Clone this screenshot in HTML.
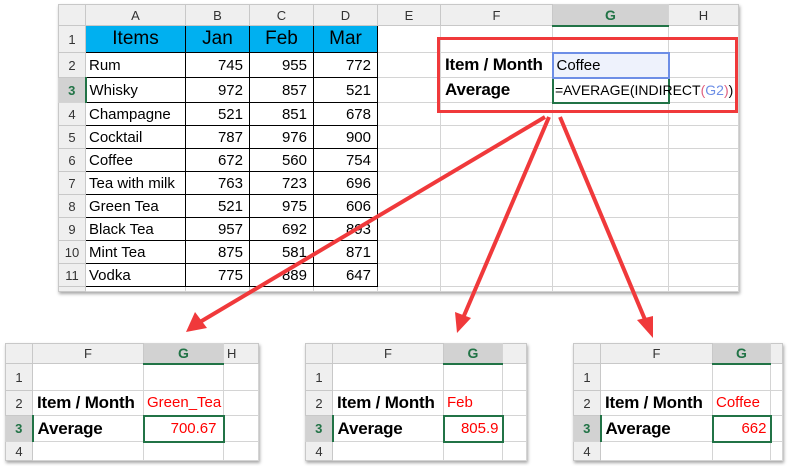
<!DOCTYPE html>
<html><head><meta charset="utf-8"><style>
*{margin:0;padding:0;box-sizing:border-box}
body{width:789px;height:466px;background:#fff;position:relative;overflow:hidden;font-family:"Liberation Sans",Calibri,sans-serif;}
table{border-collapse:collapse;table-layout:fixed;position:absolute;background:#fff}
td{border:1px solid #d4d4d4;font-size:15px;white-space:nowrap;overflow:hidden;padding:0 3px;color:#000}
td.h{background:#efefef;color:#333;text-align:center;font-size:13px;border-color:#c8c8c8}
td.hs{background:#d2d2d2;color:#217346;font-weight:bold;text-align:center;font-size:14px;border-bottom:2px solid #217346}
td.r{background:#efefef;color:#333;text-align:center;font-size:13px;border-color:#c8c8c8}
td.rs{background:#d2d2d2;color:#217346;font-weight:bold;text-align:center;font-size:13px;border-right:2px solid #217346}
.k{border:1px solid #000}
.blue{background:#00b0f0;font-size:19px;text-align:center}
.n{text-align:right;padding-right:6px}
.b{font-weight:bold;padding-left:4px;overflow:visible;font-size:17px;letter-spacing:-0.2px}
.red{color:#f00}
.sel{border:2px solid #217346!important}
.sh{box-shadow:1px 2px 3px rgba(0,0,0,.35)}
</style></head><body>

<table class="sh" style="left:58px;top:4px;width:680px">
<colgroup><col style="width:27px"><col style="width:100px"><col style="width:64px"><col style="width:64px"><col style="width:64px"><col style="width:63px"><col style="width:112px"><col style="width:116px"><col style="width:70px"></colgroup>
<tr style="height:21px"><td class="h"></td><td class="h">A</td><td class="h">B</td><td class="h">C</td><td class="h">D</td><td class="h">E</td><td class="h">F</td><td class="hs">G</td><td class="h">H</td></tr>
<tr style="height:27px"><td class="r">1</td><td class="k blue">Items</td><td class="k blue">Jan</td><td class="k blue">Feb</td><td class="k blue">Mar</td><td></td><td></td><td></td><td></td></tr>
<tr style="height:25px"><td class="r">2</td><td class="k">Rum</td><td class="k n">745</td><td class="k n">955</td><td class="k n">772</td><td></td><td class="b">Item / Month</td><td style="background:#eef2fc;border:2px solid #6d8ee6">Coffee</td><td></td></tr>
<tr style="height:25px"><td class="rs">3</td><td class="k">Whisky</td><td class="k n">972</td><td class="k n">857</td><td class="k n">521</td><td></td><td class="b">Average</td><td class="sel"></td><td></td></tr>
<tr style="height:23px"><td class="r">4</td><td class="k">Champagne</td><td class="k n">521</td><td class="k n">851</td><td class="k n">678</td><td></td><td></td><td></td><td></td></tr>
<tr style="height:23px"><td class="r">5</td><td class="k">Cocktail</td><td class="k n">787</td><td class="k n">976</td><td class="k n">900</td><td></td><td></td><td></td><td></td></tr>
<tr style="height:23px"><td class="r">6</td><td class="k">Coffee</td><td class="k n">672</td><td class="k n">560</td><td class="k n">754</td><td></td><td></td><td></td><td></td></tr>
<tr style="height:23px"><td class="r">7</td><td class="k">Tea with milk</td><td class="k n">763</td><td class="k n">723</td><td class="k n">696</td><td></td><td></td><td></td><td></td></tr>
<tr style="height:23px"><td class="r">8</td><td class="k">Green Tea</td><td class="k n">521</td><td class="k n">975</td><td class="k n">606</td><td></td><td></td><td></td><td></td></tr>
<tr style="height:23px"><td class="r">9</td><td class="k">Black Tea</td><td class="k n">957</td><td class="k n">692</td><td class="k n">893</td><td></td><td></td><td></td><td></td></tr>
<tr style="height:23px"><td class="r">10</td><td class="k">Mint Tea</td><td class="k n">875</td><td class="k n">581</td><td class="k n">871</td><td></td><td></td><td></td><td></td></tr>
<tr style="height:23px"><td class="r">11</td><td class="k">Vodka</td><td class="k n">775</td><td class="k n">889</td><td class="k n">647</td><td></td><td></td><td></td><td></td></tr>
<tr style="height:5px"><td class="r"></td><td></td><td></td><td></td><td></td><td></td><td></td><td></td><td></td></tr>
</table>
<div style="position:absolute;left:555px;top:82px;font-size:14px;z-index:3;white-space:nowrap">=AVERAGE(INDIRECT<span style="color:#e06080">(</span><span style="color:#6d8ee6">G2</span><span style="color:#e06080">)</span>)</div>
<div style="position:absolute;left:437px;top:37px;width:301px;height:76px;border:3px solid #f0393b;z-index:4"></div>

<table class="sh" style="left:5px;top:343px;width:253px">
<colgroup><col style="width:27px"><col style="width:111px"><col style="width:80px"><col style="width:35px"></colgroup>
<tr style="height:20px"><td class="h"></td><td class="h">F</td><td class="hs">G</td><td class="h" style="text-align:left">H</td></tr>
<tr style="height:27px"><td class="r">1</td><td></td><td></td><td></td></tr>
<tr style="height:25px"><td class="r">2</td><td class="b">Item / Month</td><td class="red">Green_Tea</td><td></td></tr>
<tr style="height:26px"><td class="rs">3</td><td class="b">Average</td><td class="sel red n">700.67</td><td></td></tr>
<tr style="height:19px"><td class="r">4</td><td></td><td></td><td></td></tr>
</table>

<table class="sh" style="left:305px;top:343px;width:221px">
<colgroup><col style="width:27px"><col style="width:111px"><col style="width:59px"><col style="width:24px"></colgroup>
<tr style="height:20px"><td class="h"></td><td class="h">F</td><td class="hs">G</td><td class="h"></td></tr>
<tr style="height:27px"><td class="r">1</td><td></td><td></td><td></td></tr>
<tr style="height:25px"><td class="r">2</td><td class="b">Item / Month</td><td class="red">Feb</td><td></td></tr>
<tr style="height:26px"><td class="rs">3</td><td class="b">Average</td><td class="sel red n" style="padding-right:3px">805.9</td><td></td></tr>
<tr style="height:19px"><td class="r">4</td><td></td><td></td><td></td></tr>
</table>

<table class="sh" style="left:573px;top:343px;width:209px">
<colgroup><col style="width:27px"><col style="width:112px"><col style="width:58px"><col style="width:12px"></colgroup>
<tr style="height:20px"><td class="h"></td><td class="h">F</td><td class="hs">G</td><td class="h"></td></tr>
<tr style="height:27px"><td class="r">1</td><td></td><td></td><td></td></tr>
<tr style="height:25px"><td class="r">2</td><td class="b">Item / Month</td><td class="red">Coffee</td><td></td></tr>
<tr style="height:26px"><td class="rs">3</td><td class="b">Average</td><td class="sel red n" style="padding-right:3px">662</td><td></td></tr>
<tr style="height:19px"><td class="r">4</td><td></td><td></td><td></td></tr>
</table>

<svg style="position:absolute;left:0;top:0;z-index:5" width="789" height="466">
<g stroke="#f0393b" stroke-width="4" fill="none">
<line x1="545" y1="117" x2="200" y2="322"/>
<line x1="549" y1="117" x2="463" y2="318"/>
<line x1="560" y1="117" x2="646" y2="322"/>
</g>
<g fill="#f0393b">
<polygon points="186,332 195,312 207,328"/>
<polygon points="457,333 455,312 471,318"/>
<polygon points="653,338 637,320 653,316"/>
</g>
</svg>
</body></html>
